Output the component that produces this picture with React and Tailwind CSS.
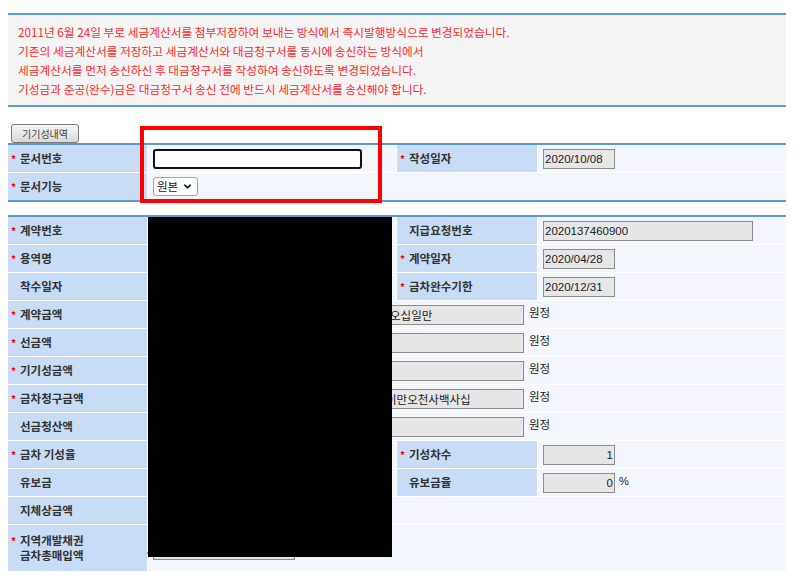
import React from "react";
import { ChevronDown } from "lucide-react";

const kr = "font-['Noto_Sans_CJK_KR',sans-serif]";
const num = "font-['Liberation_Sans','Noto_Sans_CJK_KR',sans-serif]";

const Label = ({ req, tall, children }) => (
    <div className={`flex items-center bg-[#c8dcf5] pl-[3px] text-[11.5px] font-bold text-[#333] ${tall ? 'h-[46px]' : ''} ${kr}`}>
        <div className="flex">
            <span className="w-[9px] text-[10px] leading-[15px] text-[#f00]">{req ? '*' : ''}</span>
            <div className="leading-[15px]">{children}</div>
        </div>
    </div>
);

const Cell = ({ span, children }) => (
    <div className={`flex items-center gap-[5px] bg-[#f3f6fc] pl-[5px] ${span ? 'col-span-3' : ''}`}>
        {children}
    </div>
);

const Field = ({ w, value = '', right, pad = '' }) => (
    <input
        readOnly
        value={value}
        className={`h-[20px] ${w} ${pad} border border-[#8c8c8c] bg-[#e6e6e6] px-[1px] text-[11.5px] text-[#222] outline-none ${right ? 'text-right' : ''} ${num}`}
    />
);

const Won = () => <span className={`-mt-[3px] text-[11.5px] text-[#222] ${kr}`}>원정</span>;

const notice = [
    '2011년 6월 24일 부로 세금계산서를 첨부저장하여 보내는 방식에서 즉시발행방식으로 변경되었습니다.',
    '기존의 세금계산서를 저장하고 세금계산서와 대금청구서를 동시에 송신하는 방식에서',
    '세금계산서를 먼저 송신하신 후 대금청구서를 작성하여 송신하도록 변경되었습니다.',
    '기성금과 준공(완수)금은 대금청구서 송신 전에 반드시 세금계산서를 송신해야 합니다.',
];

const App = () => {
    return (
        <div className="min-h-[578px] bg-white pt-[13px]">
            <div className="ml-[8px] w-[778px]">
                {/* notice */}
                <div className={`border-y-2 border-[#5b9bd5] bg-[#f4f4f4] py-[7px] pl-[10px] text-[11.7px] leading-[19px] text-[#ff2a2a] ${kr}`}>
                    {notice.map((line) => (
                        <div key={line}>{line}</div>
                    ))}
                </div>

                {/* 문서 정보 */}
                <div className="relative mt-[17px]">
                    <button className={`ml-[3px] flex h-[19px] w-[68px] items-center justify-center rounded-[3px] border border-[#7a7a7a] bg-gradient-to-b from-[#f7f7f7] to-[#d9d9d9] text-[10px] text-[#444] ${kr}`}>
                        기기성내역
                    </button>
                    <div className="border-y-2 border-[#5b9bd5] bg-white">
                        <div className="grid grid-cols-[139px_248px_140px_1fr] auto-rows-[27px] gap-px">
                            <Label req>문서번호</Label>
                            <Cell>
                                <input className="h-[20px] w-[209px] rounded-[3px] border-2 border-[#111] bg-white outline-none" />
                            </Cell>
                            <Label req>작성일자</Label>
                            <Cell>
                                <Field w="w-[72px]" value="2020/10/08" />
                            </Cell>

                            <Label req>문서기능</Label>
                            <Cell span>
                                <div className={`flex h-[19px] w-[45px] items-center justify-between rounded-[3px] border border-[#a6a6a6] bg-white pl-[3px] pr-[4px] text-[11.5px] text-[#222] ${kr}`}>
                                    <span>원본</span>
                                    <ChevronDown size={11} strokeWidth={3.5} />
                                </div>
                            </Cell>
                        </div>
                    </div>
                    <div className="absolute left-[132px] top-[2px] h-[77px] w-[242px] border-4 border-[#ff0000]" />
                </div>

                {/* 계약 정보 */}
                <div className="relative mt-[13px]">
                    <div className="border-y-2 border-[#5b9bd5] bg-white">
                        <div className="grid grid-cols-[139px_248px_140px_1fr] auto-rows-[27px] gap-px">
                            <Label req>계약번호</Label>
                            <Cell><Field w="w-[200px]" /></Cell>
                            <Label>지급요청번호</Label>
                            <Cell><Field w="w-[210px]" value="2020137460900" /></Cell>

                            <Label req>용역명</Label>
                            <Cell><Field w="w-[230px]" /></Cell>
                            <Label req>계약일자</Label>
                            <Cell><Field w="w-[72px]" value="2020/04/28" /></Cell>

                            <Label>착수일자</Label>
                            <Cell><Field w="w-[72px]" /></Cell>
                            <Label req>금차완수기한</Label>
                            <Cell><Field w="w-[72px]" value="2020/12/31" /></Cell>

                            <Label req>계약금액</Label>
                            <Cell span>
                                <Field w="w-[371px]" pad="pl-[236px]" value="오십일만" />
                                <Won />
                            </Cell>

                            <Label req>선금액</Label>
                            <Cell span>
                                <Field w="w-[371px]" />
                                <Won />
                            </Cell>

                            <Label req>기기성금액</Label>
                            <Cell span>
                                <Field w="w-[371px]" />
                                <Won />
                            </Cell>

                            <Label req>금차청구금액</Label>
                            <Cell span>
                                <Field w="w-[371px]" pad="pl-[232px]" value="이만오천사백사십" />
                                <Won />
                            </Cell>

                            <Label>선금청산액</Label>
                            <Cell span>
                                <Field w="w-[371px]" />
                                <Won />
                            </Cell>

                            <Label req>금차 기성율</Label>
                            <Cell><Field w="w-[72px]" /></Cell>
                            <Label req>기성차수</Label>
                            <Cell><Field w="w-[72px]" value="1" right /></Cell>

                            <Label>유보금</Label>
                            <Cell><Field w="w-[142px]" /></Cell>
                            <Label>유보금율</Label>
                            <Cell>
                                <Field w="w-[72px]" value="0" right />
                                <span className={`-ml-[1px] -mt-[3px] text-[11px] text-[#222] ${num}`}>%</span>
                            </Cell>

                            <Label>지체상금액</Label>
                            <Cell span><Field w="w-[142px]" /></Cell>

                            <Label req tall>
                                지역개발채권
                                <br />
                                금차총매입액
                            </Label>
                            <div className="col-span-3 flex h-[46px] items-end bg-[#f3f6fc] pb-[11px] pl-[5px]">
                                <Field w="w-[142px]" />
                            </div>
                        </div>
                    </div>
                    {/* 가림 처리 */}
                    <div className="absolute left-[140px] top-[2px] h-[340px] w-[244px] bg-black" />
                </div>
            </div>
        </div>
    );
};

export default App;
